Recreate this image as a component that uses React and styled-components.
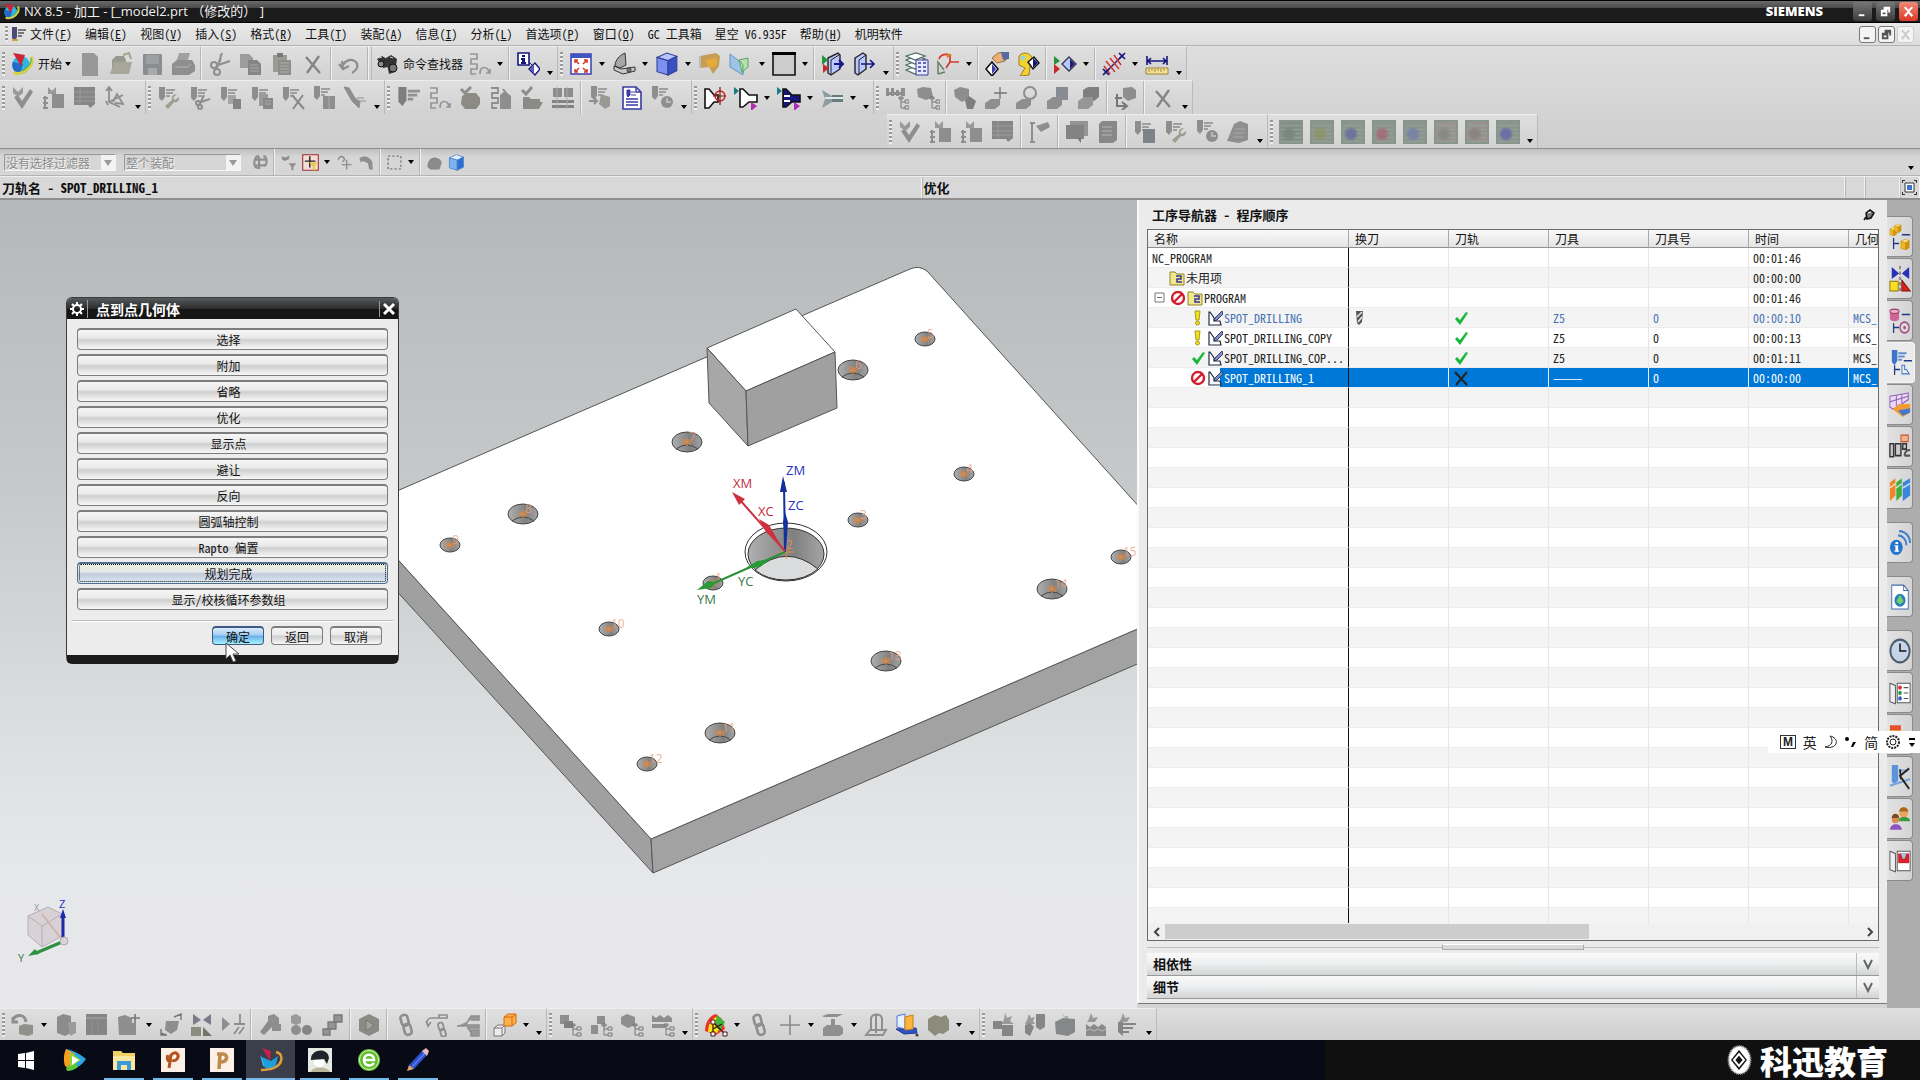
import React from 'react';
import styled, { createGlobalStyle, css } from 'styled-components';

const GlobalStyle = createGlobalStyle`
  * { box-sizing: border-box; }
  body {
    margin: 0;
    overflow: hidden;
    font-family: 'Noto Sans CJK SC', 'Liberation Sans', sans-serif;
    font-feature-settings: 'hwid';
    font-size: 12px;
    line-height: 16px;
    color: #111;
  }
  button, select {
    font: inherit;
    font-feature-settings: inherit;
    color: inherit;
    margin: 0;
    padding: 0;
    border: 0;
    background: none;
  }
`;

const GRAY = '#8e8e8e';
const DARK = '#777777';

/* ---------- icons, all on a 24 x 24 grid ---------- */

const Tool = ({ x = 0, y = 0, c = GRAY }) => (
  <g transform={`translate(${x} ${y})`} fill={c}>
    <path d="M1 0h6v10l-3 4-3-3z" />
    <path d="M8 2h9v2H8zM8 5h7v2H8zM8 8h4v2H8z" fillOpacity=".8" />
  </g>
);

const Chain = ({ x = 0, y = 0, c = GRAY }) => (
  <g transform={`translate(${x} ${y})`} fill="none" stroke={c} strokeWidth="2.6">
    <rect x="2" y="1" width="7" height="11" rx="3" transform="rotate(-15 5 6)" />
    <rect x="5" y="10" width="7" height="11" rx="3" transform="rotate(-15 8 15)" />
  </g>
);

const Tree = ({ x = 0, y = 0, c = DARK }) => (
  <path
    transform={`translate(${x} ${y})`}
    fill="none"
    stroke={c}
    d="M2 0v11h4M2 5h4M6 3h4v3H6zM6 9h4v3H6zM0 0h4v2H0z"
  />
);

const Cube = ({ x = 0, y = 0, s = 1, top = '#a5a5a5', left = '#979797', right = '#858585', edge = 'none' }) => (
  <g transform={`translate(${x} ${y}) scale(${s})`} stroke={edge}>
    <path d="M0 4l9-4 9 3-8 4z" fill={top} />
    <path d="M0 4l10 3v13L0 17z" fill={left} />
    <path d="M10 7l8-4v13l-8 4z" fill={right} />
  </g>
);

const Orbit = () => (
  <>
    <circle cx="11" cy="13" r="9" fill="#31b6df" />
    <path d="M3 10a9 9 0 0 0 7 12l3-10z" fill="#2269c9" />
    <path d="M3 1l12 2-4 11z" fill="#cf2336" />
    <path d="M21 5c3 5-1 12-8 15-4 2-8 2-9 0" fill="none" stroke="#d8cf42" strokeWidth="3" />
    <path d="M21 6c1 5-3 10-9 13" fill="none" stroke="#3fae49" />
  </>
);

const Check = ({ c = GRAY }) => <path d="M3 11l4-2 4 6L19 3l3 3-11 17z" fill={c} />;

const glyphs = {
  nx: <Orbit />,
  newFile: <path d="M4 1h12l4 4v19H4z" fill="#989898" />,
  open: <><path d="M3 8l4-4h8l2 4v14H3z" fill="#99998f" /><path d="M1 22l4-12h18l-3 12z" fill="#a7a79b" /><path d="M14 3l6-2 2 6" fill="none" stroke="#a3a38f" strokeWidth="2" /></>,
  save: <><rect x="3" y="2" width="19" height="21" rx="1" fill="#8b8e91" /><path d="M6 3h13v9H6z" fill="#9ca0a2" /><path d="M8 16h9v7H8z" fill="#a9a9a9" /></>,
  print: <><path d="M8 1h11l-3 10H5z" fill="#a0a0a0" /><path d="M1 12l5-4h15l3 5v6l-6 4H1z" fill={GRAY} /><path d="M4 15h13l3-3" fill="none" stroke="#b5b5b5" /></>,
  cut: <g fill="none" stroke={GRAY} strokeWidth="2"><path d="M9 16L14 1M10 13l12-4M13 2l-1 8" /><circle cx="6" cy="13" r="3" /><circle cx="9" cy="20" r="3" /></g>,
  copy: <><path d="M1 2h9l4 4v10H1z" fill="#9c9c9c" /><path d="M9 8h9l4 4v11H9z" fill="#858585" /><path d="M11 13h8M11 16h9M11 19h9" stroke="#a9a9a9" /></>,
  paste: <><path d="M3 3h14v17H3z" fill="#9b9b93" /><path d="M7 1h6v4H7z" fill={DARK} /><path d="M8 8h13v15H8z" fill="#8d8d89" /><path d="M10 11h9M10 14h9M10 17h9M10 20h9" stroke="#adadad" /></>,
  cross: <path d="M5 5l14 16M18 4L6 21" stroke="#858585" strokeWidth="2.4" />,
  undo: <path d="M5 17l-1-8M4 15c3-7 9-9 14-5 3 4 1 8-4 11M1 12l4 5 6-3" fill="none" stroke={GRAY} strokeWidth="2.2" />,
  finder: <><g fill="#333"><path d="M2 7l5-3 5 3 1 8-5 1z" /><path d="M11 6l5-3 6 4-2 13-6 2z" /></g><circle cx="6" cy="12" r="3" fill="#8a8a8a" stroke="#111" /><circle cx="18" cy="16" r="4" fill="#777" stroke="#111" /><path d="M4 6l3-1M15 5l3 1" stroke="#ccc" /></>,
  path: <path d="M3 2h7v5H4v5h6v5H4v5h5M13 22c0-9 8-8 9-1m-3 0h4v-4" fill="none" stroke="#969696" strokeWidth="1.7" />,
  info: <><path d="M2 1h11v12H2z" fill="#fff" stroke="#15157c" strokeWidth="1.6" /><path d="M6 3h3v2H6zM5 6h4v4h1v2H5v-2h1V8H5z" fill="#15157c" /><path d="M13 17l6-6 5 6-5 6z" fill="#fff" stroke="#15157c" strokeWidth="1.4" /><path d="M18 12v10l-4-5z" fill="#5b5bb5" /><path d="M13 10l3 3" stroke="#15157c" /></>,
  fit: <><path d="M2 2h20v20H2z" fill="#fff" stroke="#3d3db3" strokeWidth="1.5" /><path d="M2 2h20v4H2z" fill="#3d55bd" /><path d="M7 9l3 3M17 9l-3 3M7 19l3-3M17 19l-3-3M6 11V8h3M15 8h3v3M6 17v3h3M15 20h3v-3" fill="none" stroke="#d53623" strokeWidth="1.5" /></>,
  erase: <><path d="M3 14C3 8 8 3 13 1l1 12-6 3z" fill="#a7a7a7" stroke="#333" /><path d="M2 14l7 3 14-2v4l-12 3-9-4z" fill="#c9c9c9" stroke="#333" /><circle cx="17" cy="18" r="2" fill="#888" stroke="#333" /></>,
  shaded: <Cube x={2} y={1} s={1.1} top="#b7c4ff" left="#7b91f2" right="#3850c0" edge="#344199" />,
  section: <><path d="M2 4l16-3 4 3-1 10-6 8-4-7-9 1z" fill="#c79d55" /><path d="M7 8l12-2-1 8-7 2z" fill="#e6a93c" /><path d="M2 4v12" stroke="#b9b9b9" strokeWidth="2" /></>,
  clip: <><path d="M1 2l13 10v11L1 15z" fill="#9cc4e6" stroke="#6a93c0" /><path d="M10 8l9-2v9l-6 5z" fill="#b8dfb3" stroke="#57a364" /><path d="M10 8l4 5v8" fill="none" stroke="#57a364" /></>,
  square: <><path d="M1 1h22v22H1z" fill="#ccc" stroke="#111" strokeWidth="1.6" /><path d="M0 0h24v3H0z" fill="#000" /></>,
  enterPart: <><path d="M7 6l10-5 2 2v14l-9 6-3-2z" fill="#b9c9ff" stroke="#222" strokeWidth="1.4" /><path d="M10 8v14M10 8l8-5" stroke="#222" /><path d="M1 3l6 5-6 5z" fill="#23933a" /><path d="M2 12l6 4-6 5z" fill="#c92929" /><path d="M13 12h9m-4-4l4 4-4 4" fill="none" stroke="#16168a" strokeWidth="2" /></>,
  leavePart: <><path d="M3 6l8-5 3 2v14l-8 6-3-2z" fill="#b9c9ff" stroke="#222" strokeWidth="1.4" /><path d="M7 8v14M7 8l7-5" stroke="#222" /><path d="M9 12h13m-4-4l4 4-4 4" fill="none" stroke="#16168a" strokeWidth="1.7" /></>,
  layers: <><g fill="#fff" stroke="#4c6c62" strokeWidth="1.2"><path d="M1 18l10-4 9 3-10 5z" /><path d="M1 13l10-4 9 3-10 5z" /><path d="M1 8l10-4 9 3-10 5z" /><path d="M1 4l10-3 9 3-10 4z" /></g><path d="M11 8h12v15H11z" fill="#e5e9ff" stroke="#3b3b9b" /><path d="M13 11h3M18 11h3M13 15h3M18 15h3M13 19h3M18 19h3" stroke="#3b3b9b" strokeWidth="1.7" /></>,
  wcs: <><path d="M2 22V10l6 8M2 22l7-2" fill="none" stroke="#667e6c" strokeWidth="1.5" /><path d="M3 7c2-5 7-5 11-4M14 2v8l-4 6M14 10h9" fill="none" stroke="#d23a2f" strokeWidth="1.7" /><path d="M10 1l6 2-5 3z" fill="#e07925" /></>,
  handDiamond: <><path d="M7 6l6-5 6-1 4 4-3 5-8 2z" fill="#e9b073" stroke="#9b6c42" /><path d="M16 0h8v7l-6 1z" fill="#566aa4" /><path d="M1 17l6-7 6 7-6 7z" fill="#fff" stroke="#111" strokeWidth="1.6" /><path d="M7 12v10l4-5z" fill="#3b3bb5" /></>,
  keyDiamond: <><path d="M3 4c5-6 14-2 13 4l4 3-6 3-1 9-9 1 5-8-6-3z" fill="#f1d332" stroke="#a27b18" /><circle cx="7" cy="6" r="2.4" fill="#8ed4e8" /><path d="M12 10l6-5 5 6-6 6z" fill="#fff" stroke="#111" strokeWidth="1.4" /><path d="M17 6v10l5-5z" fill="#15157c" /></>,
  playDiamond: <><path d="M1 4l6 5-6 4z" fill="#23933a" /><path d="M1 12l6 5-6 5z" fill="#c92929" /><path d="M9 12l7-7 7 7-7 7z" fill="#b9c9ff" stroke="#33334c" strokeWidth="1.3" /><path d="M17 7v10l5-5z" fill="#20206e" /></>,
  distance: <><path d="M3 21L21 3" stroke="#15157c" strokeWidth="1.2" /><path d="M4 9l9 11M8 6l9 11M12 3l7 10M2 14l6 8" stroke="#d23434" strokeWidth="1.5" /><path d="M1 17l6 6M1 23l6-6M17 1l6 6M17 7l6-6" stroke="#15157c" strokeWidth="1.7" /></>,
  ruler: <><path d="M2 4v9M22 4v9M3 9h18M6 6L3 9l3 3M18 6l3 3-3 3" fill="none" stroke="#15157c" strokeWidth="1.6" /><path d="M1 16h22v6H1z" fill="#f5e19a" stroke="#9a8330" /><path d="M4 17v3M7 17v2M10 17v3M13 17v2M16 17v3M19 17v2" stroke="#9a8330" /></>,
  verify: <><Check /><path d="M2 1l5 5 5-5v6L7 11 2 7z" fill="#9a9a9a" /></>,
  opTree: <><path d="M6 1l4 4 4-4v7H6z" fill="#999" /><path d="M10 8h12v14H10z" fill={GRAY} /><path d="M3 10v12M1 12h5M1 17h5M1 22h5" stroke={GRAY} strokeWidth="2" /></>,
  list: <><path d="M1 1h21v17l-5 4-2-3H1z" fill="#868686" /><path d="M1 6h21M1 11h21M1 15h21M7 1v17" stroke="#9b9b9b" /></>,
  axes: <path d="M5 2v14l11 5M5 16l14-7M2 5l3-4 3 4M9 16l4-8 6 10-8-1M4 19l-2-4" fill="none" stroke={GRAY} strokeWidth="1.8" />,
  toolWrench: <><Tool x={1} y={1} /><path d="M20 8l-4 4 2 2 4-3c1 4-3 6-5 5l-6 7-3-3 7-6c-1-3 1-6 5-6z" fill="#a09c8e" /></>,
  toolCut: <><Tool x={2} y={1} /><g fill="none" stroke={GRAY} strokeWidth="2"><path d="M12 18l4-9M13 16l9-3" /><circle cx="10" cy="17" r="2" /><circle cx="12" cy="21" r="2" /></g></>,
  toolCopy: <><Tool x={1} y={1} /><path d="M9 9h8v9H9z" fill="#a5a5a5" /><path d="M14 13h8v10h-8z" fill="#828488" /></>,
  toolPaste: <><Tool x={1} y={1} /><path d="M9 8h9v12H9z" fill="#9b9b95" /><path d="M13 12h10v11H13z" fill="#87898a" /><path d="M15 15h6M15 18h6" stroke="#aaa" /></>,
  toolCross: <><Tool x={1} y={1} /><path d="M11 9l12 14M22 9L12 23" stroke="#888" strokeWidth="2" /></>,
  toolCard: <><Tool x={1} y={0} /><path d="M11 10h12v13H11z" fill={GRAY} /><path d="M17 10v13" stroke="#aaa" /></>,
  toolArrow: <path d="M1 1l5 1 6 10 5 4-1 6-7-7zM14 12h7M15 15h8" fill={GRAY} stroke={GRAY} />,
  tool: <g transform="translate(1 1) scale(1.35)"><Tool c="#7e7e7e" /></g>,
  toolBag: <><path d="M3 3l4 4 6-6" fill="none" stroke={GRAY} strokeWidth="3" /><path d="M4 10l5-3h9l4 5v6l-4 5H7l-4-5z" fill="#8b8b83" /></>,
  pathTool: <><path d="M2 2h7v5H3v5h6v5H3v5h5" fill="none" stroke={GRAY} strokeWidth="1.8" /><path d="M11 9l5-4 6 5v13H11z" fill={GRAY} /><path d="M14 3l3 4" stroke={GRAY} strokeWidth="2" /></>,
  checkFolder: <><path d="M2 4l4 4 6-7" fill="none" stroke={GRAY} strokeWidth="3" /><path d="M3 11h6l2 2h9v3h3l-4 7H3z" fill="#8a8a87" /></>,
  simulate: <><path d="M2 2h9v9H2zM13 2h9v9h-9z" fill="#8c8c8c" /><path d="M1 14h22v3H1zM1 19h22v3H1z" fill="#828282" /><path d="M6 1v22M16 1v22" stroke="#a9a9a9" /></>,
  post: <><Tool x={2} y={0} /><path d="M1 15h8m-3-3l3 3-3 3" fill="none" stroke={GRAY} strokeWidth="2" /><path d="M13 8l9 3v9l-5 3-6-5z" fill="#999993" /></>,
  shopDoc: <><path d="M4 1h13l5 5v17H4z" fill="#fff" stroke="#3a3aa6" strokeWidth="1.6" /><path d="M17 1v5h5M7 13h12M7 16h12M7 19h12" fill="none" stroke="#3a3aa6" strokeWidth="1.4" /><path d="M8 4h3v5l-2 2-1-2zM12 6h4M12 9h5" fill="#3a3aa6" stroke="#3a3aa6" /></>,
  toolClock: <><Tool x={1} y={0} /><circle cx="17" cy="16" r="6" fill={GRAY} /><path d="M17 12v4h4" fill="none" stroke="#c9c9c9" strokeWidth="1.4" /></>,
  funnelTarget: <><path d="M2 3h4l5 6h4v7h-4l-5 6H2z" fill="#fff" stroke="#111" strokeWidth="1.6" /><circle cx="17" cy="10" r="5" fill="none" stroke="#c22" strokeWidth="1.4" /><path d="M17 1v18M10 10h13" stroke="#7c1a1a" strokeWidth="1.2" /></>,
  funnel: <><path d="M6 3h3l6 6h8v7h-8l-6 5H6z" fill="#fff" stroke="#111" strokeWidth="1.6" /><path d="M0 1l5 4-5 4z" fill="#197c83" /><path d="M17 16l6 4-6 5z" fill="#b02bb0" /></>,
  funnelBlue: <><path d="M6 3h3l6 6h8v7h-8l-6 5H6z" fill="#15157c" stroke="#111" strokeWidth="1.6" /><path d="M7 9h6v2H7zM7 14h6v2H7z" fill="#fff" /><path d="M0 1l5 4-5 4z" fill="#197c83" /><path d="M17 16l6 4-6 5z" fill="#b02bb0" /></>,
  nozzle: <><path d="M2 4l10 6v6L2 22l3-9z" fill="#8a9c9f" /><path d="M12 9h11v7H12z" fill="#687c80" /><path d="M5 12h18" stroke="#dfe9ea" strokeWidth="2" /></>,
  wallTree: <><path d="M1 2h3v8H1zM6 2h3v8H6zM11 4h3v6h-3zM16 2h4v8h-4z" fill={GRAY} /><path d="M1 6h19v3H1z" fill={GRAY} /><Tree x={14} y={11} /></>,
  blockTree: <><path d="M1 3l6-2 8 1 2 9-7 3-8-3z" fill={GRAY} /><Tree x={14} y={11} /></>,
  twoBlocks: <><path d="M1 4l6-3 9 2v9l-7 4-7-5z" fill={GRAY} /><path d="M12 14l4-4 7 5-3 8h-6z" fill="#7d7d7d" /></>,
  plusBlock: <><path d="M16 1v12M10 7h13" stroke={DARK} strokeWidth="1.4" /><path d="M1 17l6-4h9v6l-5 4H1z" fill={GRAY} /></>,
  ringBlock: <><circle cx="15" cy="7" r="6" fill="none" stroke={GRAY} strokeWidth="2" /><path d="M1 17l6-4h9v6l-5 4H1z" fill={GRAY} /></>,
  stackBlock: <><path d="M10 1h12v13H10z" fill="#878b92" /><path d="M1 15l6-4h9v8l-5 4H1z" fill={GRAY} /></>,
  stackPile: <><path d="M6 4l5-3h11v10l-5 4H6z" fill="#7f7f7f" /><path d="M1 15l6-4h9v8l-5 4H1z" fill="#969696" /></>,
  arrowPile: <><path d="M9 2l9-1 4 3v8l-8 3-5-4z" fill={GRAY} /><path d="M3 8v12h9m-4-4l5 4-5 4M1 12h7" fill="none" stroke={DARK} strokeWidth="2" /></>,
  flag: <><path d="M4 3v18M2 22h5M2 3h5" stroke={GRAY} strokeWidth="2" /><path d="M8 6l12-4 2 5-9 5z" fill={GRAY} /></>,
  sheets: <><path d="M5 1h18v15H5z" fill="#949494" /><path d="M1 5h18v14H1z" fill="#838383" /><path d="M12 18l4 5v-5z" fill={DARK} /></>,
  book: <><path d="M6 1h15v19l-4 3H3V4z" fill="#888" /><path d="M6 7h10M6 11h10M6 15h10" stroke="#a5a5a5" strokeWidth="1.4" /></>,
  toolSheet: <><Tool x={1} y={1} /><path d="M10 9h12v14H10z" fill="#7c8288" /></>,
  report: <><path d="M8 4l6-3 8 3v16l-9 3-12-2z" fill={GRAY} /><path d="M9 9h10M8 13h10M7 17h10" stroke="#a9a9a9" /></>,
  hookBlock: <><path d="M2 6c4-5 12-5 13 3M2 4v5h5" fill="none" stroke={GRAY} strokeWidth="3" /><path d="M8 13l5-2 9 1v9l-5 2-9-2z" fill="#90908a" /></>,
  boxes: <><path d="M3 4l6-3 8 2v17l-6 3-8-3z" fill="#8c8c8c" /><path d="M14 9h8v11l-6 3z" fill="#9c9c9c" /></>,
  panel: <><path d="M1 1h21v21H1z" fill="#858585" /><path d="M1 5h21" stroke="#aaa" /><path d="M7 5v17M13 5v17" stroke="#8f8f8f" /></>,
  addPart: <><path d="M2 4l7-2 7 3v5h4v12H3z" fill={GRAY} /><path d="M19 1v9M15 5h9" stroke={DARK} strokeWidth="1.6" /></>,
  movePart: <><path d="M7 8h13l-2 9-6 4-6-4z" fill={GRAY} /><path d="M15 4l7-3v6M2 16v6h6M2 20l5 2" fill="none" stroke={DARK} strokeWidth="1.4" /></>,
  mirror: <><path d="M3 1l8 6-8 5zM21 1l-8 6 8 5z" fill="#7a7a88" /><path d="M1 14h10v9H1z" fill="#8b8b80" /><path d="M13 14l9 9h-9z" fill="#77736b" /><path d="M12 0v24" stroke="#ddd" strokeDasharray="3 2" /></>,
  constrain: <><path d="M1 4l8 7-8 7z" fill={GRAY} /><path d="M19 1v10M13 11h11M13 21l5-7M18 21l5-7" stroke={GRAY} strokeWidth="1.8" /></>,
  balls: <><path d="M10 3l6-2 5 4v6l-5 3-6-3z" fill={GRAY} /><path d="M10 8l5 5-9 9-4-3z" fill="#8b8b8b" /><path d="M14 11h9v7h-9z" fill={GRAY} /></>,
  balls3: <><path d="M2 3l5-2 5 3v6l-5 2-5-2z" fill="#9a9a9a" /><circle cx="7" cy="17" r="5" fill={GRAY} /><circle cx="18" cy="17" r="5" fill="#858585" /></>,
  steps: <g fill="#949494" stroke={DARK} strokeWidth="1.3"><path d="M14 2h8v7h-8zM8 9h8v7H8zM3 16h7v6H3z" /></g>,
  hex: <><path d="M12 1l10 5v12l-10 5L2 18V6z" fill="#8b8b86" /><path d="M9 7l8 5-8 6z" fill="#a5a5a5" stroke="#777" /></>,
  chain: <g transform="translate(5 1)"><Chain /></g>,
  pathChain: <><path d="M2 10c0-5 4-5 4-5h16M1 8l2 5 3-4M14 2h8v3h-8z" fill="none" stroke={GRAY} strokeWidth="1.7" /><g transform="translate(12 9) scale(.7)"><Chain /></g></>,
  branch: <path d="M1 13h8l6-10h8v4h-8M9 12h14v3H12l4 6M15 17h8v6h-8z" fill="#999" stroke={GRAY} strokeWidth="1.5" />,
  swapCube: <><path d="M1 15l4-3h7v8l-3 3H1z" fill="#ececec" stroke="#777" /><path d="M1 15h8v8M9 15l3-3" fill="none" stroke="#777" /><path d="M11 4l4-3h8v9l-4 3h-8z" fill="#fcb24a" stroke="#d8660c" /><path d="M11 4h8v9M19 4l4-3" fill="none" stroke="#d8660c" /></>,
  nodesA: <><path d="M2 2h9v9H2z" fill={GRAY} /><path d="M6 8h9v7H6z" fill="#808080" /><Tree x={13} y={11} /></>,
  nodesB: <><path d="M2 12h7v9H2zM8 3h8v8H8z" fill={GRAY} /><Tree x={13} y={11} /></>,
  nodesC: <><path d="M1 4l6-3 8 3v8l-7 3-7-4z" fill={GRAY} /><Tree x={13} y={11} /></>,
  nodesD: <><path d="M1 2l4 3 4-3 4 3 4-3 4 3v4H1zM1 11h13v4H1z" fill={GRAY} /><Tree x={13} y={11} /></>,
  rainbow: <><path d="M1 18C1 8 7 2 12 1l6 5 3 10-9 6z" fill="#ee3326" /><path d="M4 19c0-8 4-13 8-15l6 7-5 9z" fill="#f7e51a" /><path d="M13 2l8 7-5 9-5-5z" fill="#40b53d" /><path d="M9 21V9l12 12M9 16l9-5" fill="none" stroke="#4b1010" strokeWidth="1.3" /><path d="M7 7h4v4H7zM7 19h4v4H7zM19 19h4v4h-4z" fill="#fff" stroke="#4b1010" /></>,
  plus: <path d="M12 2v20M2 12h20" stroke="#8a8a8a" strokeWidth="1.6" />,
  press: <path d="M1 3l6-2h15l-6 3H3zM10 6h4v7h-4zM2 15l4-3h13l3 3v6l-4 2H2z" fill="#8f8f8f" />,
  arch: <path d="M7 18V6c0-6 11-6 11 0v12M12 2v18M2 22l4-5h16l-3 5z" fill="none" stroke={GRAY} strokeWidth="2" />,
  openBox: <><path d="M1 16l8 5 13-1-1-5z" fill="#2c52c4" stroke="#1c3796" /><path d="M2 3l8-2v15l-8-2z" fill="#e7f1ff" stroke="#4b78d8" /><path d="M10 4l8-2v14l-8 1z" fill="#fbb53e" stroke="#c98214" /><circle cx="22" cy="22" r="1.6" fill="#444" /></>,
  rock: <path d="M2 6l7-4 6 2 5-2 3 5v10l-6 4-4-1-4 3-7-6z" fill="#8d8b7c" />,
  burstA: <><path d="M14 0l2 5 5-2-2 5 4 3H10l3-4z" fill="#999" /><path d="M2 8h9v8H2zM11 12h11v11H11z" fill="#858585" /></>,
  burstB: <><path d="M7 1l2 4 4-1-2 4 2 3H3l2-4z" fill="#999" /><path d="M14 1h9v13l-5 3-4-3zM3 12l5-2 4 4-4 9-5-3z" fill="#868686" /></>,
  burstC: <><path d="M9 0l2 4 4-1-1 4z" fill="#999" /><path d="M2 9l8-4 12 1v13l-7 4-12-2z" fill="#858888" /></>,
  burstD: <><path d="M7 0l2 5 5-1-3 5H3l2-3z" fill="#999" /><path d="M2 11l4 3 4-3 4 3 4-3 4 3v9H2z" fill="#8a8a8a" /><path d="M2 18l4-2 4 2 4-2 4 2 4-2" fill="none" stroke="#bbb" /></>,
  burstE: <><path d="M8 0l2 5 5-1-3 5H4l2-3z" fill="#999" /><path d="M3 9h5v14l-5-4z" fill="#858585" /><path d="M8 11h13M8 15h10M8 19h6" stroke="#858585" strokeWidth="2" /></>,
  gears: <g fill="none" stroke={GRAY} strokeWidth="3"><path d="M10 3c-8 0-9 15-2 17M16 3c6 1 6 12 1 14M10 4v17M5 8h15M6 16h13" /></g>,
  filterTool: <path d="M2 3l6 2 5-3v5l-6 3-4-2zM12 13h11l-4 5v5h-3v-5z" fill={GRAY} />,
  snapFilter: <><path d="M1 1h22v22H1z" fill="#f3ddd8" stroke="#9c2e2e" strokeWidth="1.5" /><path d="M11 3v16M4 10h15" stroke="#222" strokeWidth="2" /><path d="M10 12h12l-4 5v6h-3v-6z" fill="#ecc93a" /></>,
  snapAdd: <path d="M3 8c2-6 8-6 9 0l-3 3M15 8v14M8 15h14" fill="none" stroke={GRAY} strokeWidth="2" />,
  snapHook: <path d="M2 6c6-5 15-2 18 5l1 11h-5l-2-9-7-3-3 2z" fill={GRAY} />,
  marquee: <path d="M3 3h18v18H3z" fill="none" stroke="#777" strokeWidth="2" strokeDasharray="3 3" />,
  blob: <path d="M2 18c0-6 3-12 9-13 6 0 11 3 11 8l-3 9H6z" fill="#8a8a8a" />,
  cubeOpen: <Cube x={2} y={1} s={1.1} top="#e4f1ff" left="#7db4ee" right="#2d6fd0" edge="#4a7fca" />,
};

const Glyph = ({ name, size = 24 }) => (
  <svg width={size} height={size} viewBox="0 0 24 24" aria-hidden="true">{glyphs[name]}</svg>
);

/* ---------- shell ---------- */

const Page = styled.div`
  display: flex;
  flex-direction: column;
  height: 100vh;
  background: #d4d4d4;
`;

const TitleBar = styled.header`
  display: flex;
  align-items: center;
  gap: 4px;
  height: 23px;
  flex: none;
  padding: 0 2px 1px 3px;
  color: #f2f2f2;
  background: linear-gradient(#000 0, #000 1px, #6a6a6a 1px, #4a4a4a 8px, #1b1b1b 8px, #1b1b1b 22px, #000 22px);
`;

const AppTitle = styled.h1`
  flex: 1;
  margin: 0;
  font: 400 13px/20px 'Open Sans', 'Noto Sans CJK SC', sans-serif;
  font-feature-settings: normal;
  white-space: pre;
`;

const Brand = styled.span`
  margin-right: 26px;
  font: 800 13px/20px 'Open Sans', 'Liberation Sans', sans-serif;
  font-feature-settings: normal;
  color: #fff;
`;

const WindowButton = styled.button`
  display: grid;
  place-items: center;
  width: 19px;
  height: 19px;
  border-radius: 3px;
  background: ${p => (p.$close ? 'linear-gradient(#ef8a78, #d93a26)' : 'linear-gradient(#777, #3c3c3c)')};
  ${p => p.$small && css`
    width: 17px;
    height: 17px;
    margin-left: 2px;
    border: 1px solid ${p.$off ? '#ccc' : '#777'};
    background: #f4f4f4;
  `}
`;

const Bar = styled.nav`
  display: flex;
  align-items: center;
  flex: none;
  height: 23px;
  padding: 0 6px 0 3px;
  border-bottom: 1px solid #b3b3b3;
  background: linear-gradient(#e9e9e9, #dcdcdc);
`;

const MenuItems = styled.div`
  display: flex;
  flex: 1;
  gap: 13px;
  margin-left: 4px;
`;

const MenuButton = styled.button`
  white-space: pre;
`;

const Grip = styled.span`
  width: 3px;
  height: ${p => p.$h || 24}px;
  margin: 0 2px;
  flex: none;
  background: repeating-linear-gradient(#999 0, #999 2px, #eee 2px, #eee 4px);
`;

const ToolDeck = styled.section`
  flex: none;
  border-bottom: 1px solid #8f8f8f;
  background: linear-gradient(#dedede, #cecece);
`;

const ToolRow = styled.div`
  display: flex;
  align-items: center;
  height: 34px;
  padding-left: ${p => p.$start || 0};
`;

const ToolGroup = styled.div`
  display: flex;
  align-items: center;
  height: 100%;
  border-top: 1px solid #ededed;
  border-right: 1px solid #bababa;
  background: linear-gradient(#dfdfdf, #d1d1d1);
`;

const ToolButton = styled.button`
  display: flex;
  align-items: center;
  justify-content: center;
  flex: none;
  width: ${p => p.$w || 31}px;
  height: 30px;
`;

const LabelledTool = styled.button`
  display: flex;
  align-items: center;
  gap: 4px;
  padding-left: 3px;
  white-space: nowrap;
`;

const Split = styled.span`
  width: 6px;
  height: 100%;
  flex: none;
  border-left: 2px solid transparent;
  background: linear-gradient(90deg, #b5b5b5 0 1px, #f1f1f1 1px 2px, transparent 2px);
  background-clip: padding-box;
`;

const Drop = styled.button`
  display: flex;
  justify-content: center;
  align-self: ${p => (p.$low ? 'flex-end' : 'center')};
  flex: none;
  width: ${p => (p.$low ? 14 : 12)}px;
  padding: ${p => (p.$low ? '0 0 5px' : 0)};

  &::after {
    content: '';
    border: 3px solid transparent;
    border-top: 4px solid #000;
    border-bottom: 0;
  }
`;

const Swatch = styled.button`
  width: 24px;
  height: 24px;
  margin: 0 3px 0 4px;
  flex: none;
  border: 2px solid #88958c;
  background: ${p => `radial-gradient(circle at 40% 60%, ${p.$spot} 0 25%, transparent 45%), repeating-linear-gradient(${p.$base} 0 3px, #96a098 3px 4px)`};
`;

const SelectionBar = styled.section`
  display: flex;
  align-items: center;
  flex: none;
  height: 27px;
  padding: 0 2px 0 4px;
  border-bottom: 1px solid #b3b3b3;
  background: linear-gradient(#c0c0c0, #d6d6d6 8px);
`;

const Combo = styled.label`
  display: flex;
  align-items: center;
  width: ${p => p.$w}px;
  height: 17px;
  margin-right: 8px;
  border: 1px solid #aaa;
  border-color: #999 #f5f5f5 #f5f5f5 #999;

  select {
    flex: 1;
    min-width: 0;
    height: 15px;
    padding-left: 1px;
    line-height: 15px;
    color: #8b8b8b;
    opacity: 1;
    text-shadow: 1px 1px #f4f4f4;
    appearance: none;
  }

  svg { background: #f3f3f3; }
`;

const StatusBar = styled.section`
  display: flex;
  flex: none;
  height: 24px;
  border-top: 1px solid #eee;
  border-bottom: 2px solid #8f8f8f;
  background: #d8d8d8;
  font-weight: 700;
`;

const StatusCell = styled.div`
  display: flex;
  align-items: center;
  flex: ${p => p.$flex};
  padding-left: 2px;
  font-size: 13px;
  border-right: 1px solid #f2f2f2;
  box-shadow: 1px 0 #b5b5b5;
`;

const Workspace = styled.main`
  display: flex;
  flex: 1;
  min-height: 0;
`;

const Viewport = styled.section`
  position: relative;
  flex: 1;
  min-width: 0;
  overflow: hidden;
  background: linear-gradient(#b4b8b9 0, #c6c9ca 35%, #d9dcdd 62%, #e6e7ea 82%, #e8e8eb 100%);
`;

const Scene = styled.svg`
  display: block;
  width: 100%;
  height: 100%;
  font-family: 'Open Sans', sans-serif;
  font-feature-settings: normal;
`;

/* ---------- dialog ---------- */

const Dialog = styled.section`
  position: absolute;
  left: 66px;
  top: 97px;
  width: 333px;
  border: 1px solid #3c3c3c;
  border-bottom: 9px solid #1b1b1b;
  border-radius: 6px;
  background: #ececec;
`;

const DialogTitle = styled.header`
  display: flex;
  align-items: center;
  height: 21px;
  border-radius: 5px 5px 0 0;
  color: #fff;
  background: linear-gradient(#555b5b, #2b2b2b 50%, #151515 52%);

  h2 {
    flex: 1;
    margin: 0;
    padding-left: 8px;
    border-left: 1px solid #999;
    font-size: 14px;
    line-height: 18px;
  }
  svg { margin: 0 3px; }
  button { display: flex; border-left: 1px solid #999; }
`;

const ActionList = styled.div`
  display: grid;
  gap: 4px;
  margin: 9px 5px 0;
  padding: 0 5px 10px;
  border-bottom: 1px solid #bdbdbd;
  box-shadow: 0 1px #fff;
`;

const PushButton = styled.button`
  height: 22px;
  padding-right: 8px;
  border: 1px solid #7d7d7d;
  border-top-width: 2px;
  border-radius: 4px;
  line-height: 18px;
  background: linear-gradient(#f6f6f6, #e9e9e9 42%, #cfcfcf 52%, #f7f7f7);
  ${p => p.$small && css`
    width: 52px;
    height: 19px;
    padding-right: 0;
    line-height: 15px;
  `}
  ${p => p.$focused && css`
    border-color: #4f6f8f;
    background: linear-gradient(#eceee0, #e4e8e8 42%, #c2c9dc 52%, #dceaf2);
    outline: 1px dotted #111;
    outline-offset: -3px;
  `}
  ${p => p.$primary && css`
    border-color: #3d5a86;
    background: linear-gradient(#d8ecfa, #a9cff3 42%, #6bb2ee 52%, #a7f2fb);
  `}
`;

const DialogFooter = styled.footer`
  display: flex;
  justify-content: flex-end;
  gap: 7px;
  padding: 5px 16px 10px;
`;

const Pointer = styled.svg`
  position: absolute;
  left: 225px;
  top: 442px;
`;

/* ---------- navigator ---------- */

const Navigator = styled.aside`
  display: flex;
  flex-direction: column;
  flex: 0 0 750px;
  min-width: 0;
  margin-bottom: 4px;
  padding: 0 8px 4px 8px;
  border-left: 2px solid #fafafa;
  border-bottom: 1px solid #777;
  background: #ebebeb;
`;

const NavHeader = styled.header`
  display: flex;
  align-items: center;
  justify-content: space-between;
  height: 29px;
  padding: 0 4px 0 5px;

  h2 { margin: 0; font-size: 13px; }
`;

const TableFrame = styled.div`
  display: flex;
  flex-direction: column;
  flex: 1;
  min-height: 0;
  border: 1px solid #6b6b6b;
  background: #fff;
`;

const TableClip = styled.div`
  flex: 1;
  min-height: 0;
  overflow: hidden;
`;

const OpTable = styled.table`
  width: 100%;
  table-layout: fixed;
  border-collapse: separate;
  border-spacing: 0;
`;

const HeadCell = styled.th`
  width: ${p => (p.$w ? `${p.$w}px` : 'auto')};
  height: 18px;
  padding: 0 0 0 6px;
  border-right: 1px solid #aaa;
  border-bottom: 1px solid #8f8f8f;
  font-weight: 400;
  line-height: 16px;
  text-align: left;
  white-space: nowrap;
  background: linear-gradient(#f9f9f9, #e4e4e4);

  &:last-child { border-right: 0; }
`;

const Row = styled.tr`
  color: ${p => p.$color || '#222'};
  background: ${p => (p.$odd ? '#f4f4f4' : '#fff')};

  td { ${p => p.$selected && css`background: #0078d7; border-right-color: #eee;`} }
  td:first-child { ${p => p.$selected && css`background: linear-gradient(90deg, #fff 72px, #0078d7 72px);`} }
`;

const Cell = styled.td`
  height: 20px;
  padding: 0 0 0 4px;
  overflow: hidden;
  white-space: nowrap;
  line-height: 18px;
  border-right: 1px solid ${p => (p.$first ? '#111 !important' : '#e6e6e6')};
  border-bottom: 1px solid #ececec;

  &:last-child { border-right: 0; }
  svg { display: block; flex: none; }
`;

const NameBox = styled.div`
  display: flex;
  align-items: center;
  gap: 1px;
  height: 18px;
  padding-left: ${p => p.$indent}px;
`;

const ScrollTrack = styled.div`
  display: flex;
  align-items: center;
  height: 17px;
  flex: none;
  background: #f0f0f0;

  button { display: flex; width: 17px; justify-content: center; }
  div { flex: 1; height: 15px; padding-right: 272px; }
  span { display: block; height: 15px; background: #cdcdcd; }
`;

const Splitter = styled.div`
  display: flex;
  align-items: center;
  height: 12px;
  flex: none;
  &::before, &::after { content: ''; flex: 295 0 0; height: 1px; background: #bdbdbd; }
  span { flex: 140 0 0; height: 6px; border: 1px solid #aaa; background: #d9d9d9; border-top-color: #fff; }
`;

const Fold = styled.button`
  display: flex;
  align-items: center;
  justify-content: space-between;
  height: 23px;
  flex: none;
  padding-left: 6px;
  border-bottom: 1px solid #999;
  font-size: 13px;
  font-weight: 700;
  background: linear-gradient(#f9f9f9, #eef0f1 45%, #d3d5d5);

  svg { padding: 0 4px; width: 23px; height: 22px; border-left: 1px solid #bbb; }
`;

const TabRail = styled.nav`
  display: flex;
  flex-direction: column;
  gap: 1px;
  flex: 0 0 33px;
  padding-top: 16px;
  background: #adadad;
`;

const Tab = styled.button`
  display: grid;
  place-items: center;
  width: 26px;
  height: 41px;
  margin-top: ${p => (p.$gap ? 12 : 0)}px;
  flex: none;
  border: 1px solid #8a8a8a;
  border-left: 0;
  border-radius: 0 4px 4px 0;
  background: linear-gradient(90deg, #e2e2e2, #d4d4d4);
  ${p => p.$active && css`
    width: 28px;
    border-color: #f7f7f7;
    background: #ebebeb;
  `}
`;

const ImeBar = styled.aside`
  position: fixed;
  right: 0;
  top: 731px;
  display: flex;
  align-items: center;
  justify-content: space-between;
  width: 152px;
  height: 22px;
  padding: 0 4px 0 12px;
  background: #fff;
  font-size: 14px;
  color: #222;
`;

const ImeKey = styled.b`
  padding: 0 2px;
  border: 1px solid #333;
  font: 700 12px/12px 'Liberation Sans', sans-serif;
`;

/* ---------- bottom ---------- */

const BottomTools = styled.section`
  display: flex;
  flex: none;
  height: 32px;
  background: linear-gradient(#dfdfdf, #cfcfcf);
`;

const Taskbar = styled.footer`
  display: flex;
  flex: none;
  height: 40px;
  padding-left: 1px;
  background: linear-gradient(90deg, #080b15 69%, #101010 69%);
`;

const TaskButton = styled.button`
  display: flex;
  align-items: center;
  justify-content: center;
  width: 49px;
  height: 40px;
  background: ${p => (p.$active ? '#3a3f4b' : 'none')};
  box-shadow: ${p => (p.$open ? 'inset 0 -2px #76b9ed' : 'none')};
  ${p => p.$open && !p.$active && css`
    width: 40px;
    margin: 0 4px 0 5px;
  `}
`;

const Watermark = styled.div`
  display: flex;
  align-items: center;
  gap: 8px;
  margin: 0 32px 0 auto;
  font-size: 32px;
  font-weight: 900;
  line-height: 38px;
  color: #fff;
`;

/* ---------- data ---------- */

const D = 'drop';
const M = 'more';
const S = 'split';

const rowOneA = ['newFile', 'open', 'save', 'print', S, 'cut', 'copy', 'paste', 'cross', S, 'undo', S];
const rowOneB = ['path', D, S, 'info', M];
const rowOneC = ['fit', D, 'erase', D, 'shaded', D, 'section', 'clip', D, 'square', D, S, 'enterPart', 'leavePart', M];
const rowOneD = ['layers', 'wcs', D, S, 'handDiamond', 'keyDiamond', S, 'playDiamond', D, S, 'distance', D, 'ruler', M];

const rowTwo = [
  ['verify', 'opTree', 'list', 'axes', M],
  ['toolWrench', 'toolCut', 'toolCopy', 'toolPaste', 'toolCross', 'toolCard', 'toolArrow', M],
  ['tool', 'path', 'toolBag', 'pathTool', 'checkFolder', 'simulate', S, 'post', 'shopDoc', 'toolClock', M],
  ['funnelTarget', 'funnel', D, 'funnelBlue', D, 'nozzle', D, M],
  ['wallTree', 'blockTree', S, 'twoBlocks', 'plusBlock', 'ringBlock', 'stackBlock', 'stackPile', S, 'arrowPile', S, 'cross', M],
];

const rowThree = ['verify', 'opTree', 'opTree', 'list', S, 'flag', S, 'sheets', 'book', S, 'toolSheet', 'toolWrench', 'toolClock', 'report', M];

const swatches = [
  ['#848f88', '#788a80'], ['#8d968a', '#8d956f'], ['#8a968e', '#6c769b'], ['#8d968e', '#a07277'],
  ['#8a968e', '#7983a3'], ['#989490', '#8a8a82'], ['#9a9290', '#8b8580'], ['#8b978e', '#6a70a4'],
];

const bottomGroups = [
  ['hookBlock', D, 'boxes', 'panel', 'addPart', D, 'movePart', 'mirror', 'constrain', S, 'balls', 'balls3', 'steps', S, 'hex', S, 'chain', 'pathChain', 'branch', S, 'swapCube', D, M],
  ['nodesA', 'nodesB', 'nodesC', 'nodesD', M],
  ['rainbow', D, 'chain', 'plus', D, 'press', D, 'arch', 'openBox', 'rock', D, M],
  ['burstA', 'burstB', 'burstC', 'burstD', 'burstE', M],
];

const menus = [
  ['文件', 'F'], ['编辑', 'E'], ['视图', 'V'], ['插入', 'S'], ['格式', 'R'], ['工具', 'T'], ['装配', 'A'],
  ['信息', 'I'], ['分析', 'L'], ['首选项', 'P'], ['窗口', 'O'], ['GC 工具箱'], ['星空 V6.935F'], ['帮助', 'H'], ['机明软件'],
];

const actions = ['选择', '附加', '省略', '优化', '显示点', '避让', '反向', '圆弧轴控制', 'Rapto 偏置', '规划完成', '显示/校核循环参数组'];

const columns = [['名称', 201], ['换刀', 100], ['刀轨', 100], ['刀具', 100], ['刀具号', 100], ['时间', 100], ['几何']];

const operations = [
  { name: 'NC_PROGRAM', time: '00:01:46', indent: 0 },
  { name: '未用项', time: '00:00:00', indent: 17, icons: ['folder'] },
  { name: 'PROGRAM', time: '00:01:46', indent: 1, icons: ['minus', 'stop', 'folder'] },
  { name: 'SPOT_DRILLING', time: '00:00:10', indent: 38, icons: ['warn', 'op'], change: true, track: 'ok', tool: 'Z5', no: '0', geo: 'MCS_', color: '#4873b5' },
  { name: 'SPOT_DRILLING_COPY', time: '00:00:13', indent: 38, icons: ['warn', 'op'], track: 'ok', tool: 'Z5', no: '0', geo: 'MCS_' },
  { name: 'SPOT_DRILLING_COP...', time: '00:01:11', indent: 38, icons: ['ok', 'op'], track: 'ok', tool: 'Z5', no: '0', geo: 'MCS_' },
  { name: 'SPOT_DRILLING_1', time: '00:00:00', indent: 38, icons: ['stop', 'op'], track: 'none', tool: '———', no: '0', geo: 'MCS_', color: '#fff', selected: true },
];

const fillerRows = Array.from({ length: 30 }, (_, i) => i + operations.length);

const marks = {
  minus: <path d="M2 3h9v9H2zM4 7.5h5" fill="#fff" stroke="#777" />,
  stop: <><circle cx="8" cy="8" r="6" fill="#fff" stroke="#d01f2e" strokeWidth="2.4" /><path d="M12 4l-8 8" stroke="#d01f2e" strokeWidth="2.4" /></>,
  folder: <><path d="M1 2h5l2 2h7v11H1z" fill="#f1e88c" stroke="#8f8426" /><path d="M7 6h5v3H8v3h5" fill="none" stroke="#35359c" strokeWidth="1.5" /></>,
  warn: <><path d="M5 1h5l-1 9H6z" fill="#f2e21c" stroke="#a79a20" /><circle cx="7.5" cy="13" r="2" fill="#f2e21c" stroke="#a79a20" /></>,
  op: <><path d="M2 2v13h12l-1-4H7V8L3 2z" fill="#fff" stroke="#222a44" strokeWidth="1.2" /><path d="M15 1L8 8l-1 3 3-1 6-6z" fill="#7f8fc4" stroke="#333a66" /></>,
  ok: <path d="M2 9l2-2 3 3 6-8 2 1-8 12z" fill="#19b83b" />,
  none: <path d="M2 2l12 13M14 2L3 15" stroke="#222" strokeWidth="2" />,
  drill: <><path d="M3 1h7l-1 11-3 3-2-2z" fill="#555" /><path d="M4 7l5-5M5 12l4-5" stroke="#eee" strokeWidth="1.4" /></>,
};

const Mark = ({ name, size = 16 }) => (
  <svg width={size} height={size} viewBox="0 0 16 16" aria-hidden="true">{marks[name]}</svg>
);

const tabIcons = [
  { art: <><Cube x={1} y={3} s={0.4} top="#ffe07a" left="#f2b91d" right="#d7920c" edge="#b8860b" /><Cube x={6} y={0} s={0.4} top="#ffe07a" left="#f2b91d" right="#d7920c" edge="#b8860b" /><Cube x={13} y={14} s={0.5} top="#ffe07a" left="#f2b91d" right="#d7920c" edge="#b8860b" /><path d="M5 13v10M5 18h6M14 10h9" stroke="#223a86" strokeWidth="1.4" /></> },
  { art: <><path d="M3 1l8 6-8 5zM22 1l-8 6 8 5z" fill="#2a30b8" /><path d="M1 14h9v9H1z" fill="#f8df24" stroke="#867612" /><path d="M14 13l9 10h-9z" fill="#d8261c" stroke="#7d120c" /><path d="M12 0v24" stroke="#333" strokeDasharray="3 2" /></> },
  { art: <><path d="M1 3v7c0 3 10 3 10 0V3z" fill="#cf6496" /><ellipse cx="6" cy="3" rx="5" ry="2" fill="#edabc8" stroke="#98406a" /><path d="M5 14v9M5 18h6M14 6h9" stroke="#223a86" strokeWidth="1.4" /><circle cx="17" cy="18" r="5" fill="none" stroke="#a64a88" strokeWidth="1.5" /><circle cx="17" cy="18" r="1.5" fill="#a64a88" /></> },
  { active: true, art: <><Tool x={1} y={0} c="#3f74c9" /><path d="M5 14v9M5 18h6M15 10h9" stroke="#223a86" strokeWidth="1.4" /><path d="M13 14v8h8l-3-4h-2v-4z" fill="none" stroke="#3f74c9" /></> },
  { art: <><path d="M1 4l20-3v6L5 16 1 14z" fill="#ead6f5" stroke="#8b5db4" /><path d="M1 9l20-5M8 3v10M14 2v8" stroke="#8b5db4" /><path d="M4 16l7-5h12v8l-8 4z" fill="#f29a33" /><path d="M10 17l13-2v4l-8 3z" fill="#4478cf" /></> },
  { art: <><path d="M1 9h4v12H1zM7 9h6v11H7zM15 9h4v5h-4z" fill="#ccc" stroke="#333" strokeWidth="1.5" /><path d="M13 1h8v6h-8z" fill="#f5b08f" stroke="#c8512d" /><path d="M17 20c0-6 6-5 6-5M17 20h6" fill="none" stroke="#555" strokeWidth="2" /></> },
  { art: <><path d="M1 6l6-4v16l-6 5z" fill="#f0852a" /><path d="M8 6l6-4v16l-6 5z" fill="#3fae3f" /><path d="M15 6l8-4v16l-8 5z" fill="#3c85dc" /><path d="M1 11l6-4M8 11l6-4M15 11l8-4" stroke="#fff" strokeOpacity=".7" strokeWidth="1.5" /></> },
  { gap: true, art: <><circle cx="8" cy="16" r="7" fill="#2276cf" /><path d="M7 11h3v2H7zM6 14h4v5h1v1H6v-1h1v-4H6z" fill="#fff" /><path d="M10 5c5 0 9 4 9 9M11 1c7 0 12 5 12 11" fill="none" stroke="#3f7fd0" strokeWidth="2" /></> },
  { gap: true, art: <><path d="M3 1h13l5 5v17H3z" fill="#fff" stroke="#4668b1" /><path d="M16 1v5h5" fill="none" stroke="#4668b1" /><circle cx="12" cy="15" r="6" fill="#2b7eb9" /><path d="M8 16l4-6 4 6-4 3z" fill="#78cf67" /></> },
  { gap: true, art: <><circle cx="12" cy="12" r="10.5" fill="#c5d4e6" stroke="#4b5a6b" strokeWidth="2" /><path d="M12 5v7h7" fill="none" stroke="#111" strokeWidth="1.6" /></> },
  { art: <><path d="M1 3l6 2v17l-6-2z" fill="#eee" stroke="#555" /><path d="M9 3h14v18H9z" fill="#fff" stroke="#555" /><circle cx="12" cy="7" r="2" fill="#d63030" /><circle cx="12" cy="12" r="2" fill="#2c9c43" /><circle cx="12" cy="17" r="2" fill="#2e5fc9" /><path d="M16 7h5M16 12h5M16 17h5" stroke="#555" /></> },
  { art: <><path d="M1 3h12v5H1z" fill="#e8502c" /><path d="M1 8h14v5H1z" fill="#f7d321" /><path d="M1 13h10v9H1z" fill="#4ea84e" /></> },
  { art: <><path d="M3 1h7v14l-4 4-3-3z" fill="#5a94da" /><path d="M1 20l22-6M11 6h10" stroke="#7ba7df" strokeWidth="2" /><path d="M22 4L12 11l10 12M12 5l1 9" fill="none" stroke="#222" strokeWidth="2" /></> },
  { art: <><circle cx="16" cy="6" r="5" fill="#e7a762" /><path d="M10 14c0-5 13-5 13 0z" fill="#3b9a3e" /><path d="M11 5c1-5 9-5 10 0z" fill="#a8661f" /><circle cx="7" cy="12" r="4" fill="#d98b54" /><path d="M3 11c0-5 8-5 8 0z" fill="#7c4a1c" /><path d="M1 22c0-7 13-7 13 0z" fill="#9154bd" /></> },
  { art: <><path d="M1 3l6 2v17l-6-2z" fill="#eee" stroke="#555" /><path d="M9 3h14v18H9z" fill="#fff" stroke="#555" /><path d="M10 5h12v9H10z" fill="#d5222c" /><path d="M13 5h6l-2 5h-2z" fill="#8fd0f1" /></> },
];

const holes = [
  { x: 925, y: 339, n: '5' }, { x: 964, y: 474, n: '4' }, { x: 858, y: 520, n: '3' }, { x: 1121, y: 557, n: '15' },
  { x: 713, y: 583, n: '1' }, { x: 450, y: 545, n: '9' }, { x: 609, y: 629, n: '10' }, { x: 647, y: 764, n: '12' },
  { x: 853, y: 370, n: '6', big: true }, { x: 687, y: 442, n: '7', big: true }, { x: 523, y: 514, n: '8', big: true },
  { x: 1052, y: 589, n: '14', big: true }, { x: 886, y: 661, n: '13', big: true }, { x: 720, y: 733, n: '11', big: true },
];

const tasks = [
  { label: '开始菜单', art: <path d="M4 6l7-1v7H4zM12 5l8-2v9h-8zM4 13h7v7l-7-1zM12 13h8v9l-8-2z" fill="#fff" /> },
  { label: '视频', art: <><path d="M3 1c9 2 15 6 20 10-3 5-8 9-18 12z" fill="#29a3ea" /><path d="M3 1l9 5-7 14-3-2C0 12 1 5 3 1z" fill="#f5a11d" /><path d="M3 20l9-6 3 5c-4 3-8 4-11 4z" fill="#59c637" /><path d="M7 4l11 8-11 7z" fill="#8ed63c" /><path d="M9 8l7 4-7 5z" fill="#fff" /></> },
  { label: '文件', open: true, art: <><path d="M1 3h8l2 2h12v17H1z" fill="#f3d063" /><path d="M1 8h22v14H1z" fill="#fbe7a0" /><path d="M5 22v-9h14v9h-4v-5H9v5z" fill="#3b9bd6" /></> },
  { label: '演示一', open: true, art: <><path d="M0 0h24v24H0z" fill="#fdf0e6" /><path d="M8 20l2-13c5-5 9 0 6 4-2 2-4 2-5 1M7 7c-2 5 1 7 3 6" fill="none" stroke="#b5541c" strokeWidth="3" /></> },
  { label: '演示二', open: true, art: <><path d="M0 0h24v24H0z" fill="#fdf0e6" /><path d="M7 6h6c6 1 4 8-2 8M10 6l-1 15" fill="none" stroke="#c08a4c" strokeWidth="3.6" /></> },
  { label: 'NX', open: true, active: true, art: <><path d="M1 7l10 14-7-3z" fill="#29b9e8" /><path d="M3 9l9 4 7-5-3 12-9 2z" fill="#1f9fdc" /><path d="M3 0l9 3-1 10z" fill="#c3224b" /><path d="M17 4c8 2 7 12-2 16-5 2-10 2-13 2" fill="none" stroke="#e59d33" strokeWidth="2.4" /></> },
  { label: '头像', open: true, art: <><path d="M0 0h24v24H0z" fill="#e9e9e4" /><path d="M3 11C3 1 20-1 21 10l-2 6-3-5-13 1z" fill="#20242a" /><path d="M6 12h10v5l-5 3-5-4z" fill="#fff" /><path d="M3 24c1-6 17-6 19 0z" fill="#b9b69c" /></> },
  { label: '浏览器', open: true, art: <><circle cx="12" cy="12" r="11" fill="#61bd2c" /><circle cx="12" cy="12" r="9.5" fill="none" stroke="#d8f5c5" /><path d="M7 12h10c0-7-10-7-10 0 0 6 7 7 10 3" fill="none" stroke="#fff" strokeWidth="2.6" /></> },
  { label: '画笔', open: true, art: <><path d="M3 17L17 2l5 4L8 21z" fill="#2c4fcb" /><path d="M6 19L19 5" stroke="#5f7fe8" strokeWidth="1.5" /><path d="M16 3l4-3 3 3-2 5z" fill="#e6bcbc" /><path d="M1 23l2-6 5 4z" fill="#d8a56a" /></> },
];

/* ---------- parts ---------- */

const Tools = ({ items }) => items.map((item, i) => {
  if (item === S) return <Split key={i} />;
  if (item === D) return <Drop key={i} aria-label="展开" />;
  if (item === M) return <Drop key={i} $low aria-label="更多" />;
  return <ToolButton key={i} aria-label={item}><Glyph name={item} /></ToolButton>;
});

const Group = ({ items, children }) => (
  <ToolGroup>
    <Grip />
    {children}
    {items && <Tools items={items} />}
  </ToolGroup>
);

const winArt = {
  min: 'M3 10h6v2H3z',
  restore: 'M5 2h7v6h-2V5H5zM2 5h7v7H2zm2 3v2h3V8z',
  close: 'M2 3l2-1 3 3 3-3 2 1-4 4 4 4-2 2-3-4-3 4-2-2 4-4z',
};

const WindowButtons = ({ small }) => ['min', 'restore', 'close'].map(name => (
  <WindowButton key={name} $small={small} $close={name === 'close'} $off={small && name === 'close'} aria-label={name}>
    <svg width="13" height="13" viewBox="0 0 14 14">
      <path d={winArt[name]} fill={small ? (name === 'close' ? '#ccc' : '#555') : '#fff'} fillRule="evenodd" />
    </svg>
  </WindowButton>
));

const Hole = ({ x, y, n, big }) => {
  const rx = big ? 15 : 10;
  const ry = big ? 10 : 7;
  return (
    <g transform={`translate(${x} ${y})`}>
      <ellipse rx={rx} ry={ry} fill="url(#bore)" stroke="#444" />
      {big && <path d="M-11 7Q0-1 11 7" fill="none" stroke="#444" />}
      <path d="M-5 0h10M0-4v8M-4-3l8 6M-4 3l8-6" stroke="#e88a3c" />
      <text x="2" y="-1" fontSize="12" fill="#eba27d" fillOpacity=".8">{n}</text>
    </g>
  );
};

const Model = () => (
  <Scene viewBox="0 200 1137 808" preserveAspectRatio="xMinYMin slice">
    <defs>
      <linearGradient id="bore"><stop offset="0" stopColor="#b0b0b0" /><stop offset=".6" stopColor="#808080" /><stop offset="1" stopColor="#a5a5a5" /></linearGradient>
    </defs>
    <g stroke="#555" strokeLinejoin="round">
      <path d="M353 510L651 839L653 873L353 543z" fill="#a0a0a0" />
      <path d="M651 839L1142 627V662L653 873z" fill="#a2a2a2" />
      <path d="M353 510L910 269Q919 265 927 271L1142 510V627L651 839z" fill="#fff" />
      <path d="M707 348L796 309L835 352L746 391z" fill="#fff" />
      <path d="M707 348L746 391L748 446L709 403z" fill="#a7a7a7" />
      <path d="M746 391L835 352L837 408L748 446z" fill="#a0a0a0" />
    </g>
    {holes.map(h => <Hole key={h.n} {...h} />)}
    <ellipse cx="786" cy="552" rx="41" ry="29" fill="#fff" stroke="#333" />
    <ellipse cx="786" cy="554" rx="38" ry="26" fill="url(#bore)" stroke="#333" />
    <path d="M755 570Q786 543 818 569Q805 580 786 580T755 570z" fill="#d9dbdc" stroke="#333" />
    <text x="786" y="549" fontSize="12" fill="#d98b52">2</text>
    <path d="M778 552h16M786 545v14" stroke="#e88a3c" />
    <g strokeWidth="2">
      <path d="M785 552L784 482" stroke="#14309c" />
      <path d="M783 476l4 16h-7zM785 512l3 10-2 28-3-28z" fill="#14309c" />
      <path d="M785 551L740 500" stroke="#cf3040" />
      <path d="M732 492l13 7-6 6zM759 519l10 6 14 24-17-17z" fill="#cf3040" />
      <path d="M785 552L705 587" stroke="#2a8f37" />
      <path d="M697 590l11-9 9 1-6 6zM744 569l13-8 14-2-11 8z" fill="#2a9a38" />
    </g>
    <g fontSize="13">
      <text x="786" y="475" fill="#2232c4">ZM</text>
      <text x="788" y="510" fill="#2232c4">ZC</text>
      <text x="733" y="488" fill="#c22e3c">XM</text>
      <text x="758" y="516" fill="#c22e3c">XC</text>
      <text x="738" y="586" fill="#3a7846">YC</text>
      <text x="697" y="604" fill="#3a7846">YM</text>
    </g>
    <g>
      <path d="M28 916L48 907L62 914V936L42 947L28 935z" fill="#d8d2d6" stroke="#b5adb3" />
      <path d="M28 916L42 926L62 914M42 926V947" fill="none" stroke="#b5adb3" />
      <path d="M63 941L42 914" stroke="#d1b5a8" strokeWidth="2" />
      <path d="M63 940V916" stroke="#1c2aa5" strokeWidth="3" />
      <path d="M63 909l3 9h-6z" fill="#1c2aa5" />
      <path d="M62 942L36 953" stroke="#2c9142" strokeWidth="3" />
      <path d="M28 956l7-7 4 5z" fill="#2c9142" />
      <circle cx="64" cy="941" r="4" fill="#ddd2da" stroke="#aaa" />
      <text x="59" y="908" fontSize="11" fill="#2232c4">Z</text>
      <text x="18" y="962" fontSize="11" fill="#3a7846">Y</text>
      <text x="34" y="911" fontSize="9" fill="#999">X</text>
    </g>
  </Scene>
);

const PointDialog = () => (
  <Dialog aria-label="点到点几何体">
    <DialogTitle>
      <svg width="14" height="14" viewBox="0 0 14 14"><circle cx="7" cy="7" r="4" fill="none" stroke="#fff" strokeWidth="2" /><path d="M7 0v3M7 11v3M0 7h3M11 7h3M2 2l2 2M10 10l2 2M12 2l-2 2M2 12l2-2" stroke="#fff" strokeWidth="2" /></svg>
      <h2>点到点几何体</h2>
      <button aria-label="关闭"><svg width="12" height="16" viewBox="0 0 12 16"><path d="M1 3l10 10M11 3L1 13" stroke="#fff" strokeWidth="3" /></svg></button>
    </DialogTitle>
    <ActionList>
      {actions.map(a => <PushButton key={a} $focused={a === '规划完成'}>{a}</PushButton>)}
    </ActionList>
    <DialogFooter>
      <PushButton $small $primary>确定</PushButton>
      <PushButton $small>返回</PushButton>
      <PushButton $small>取消</PushButton>
    </DialogFooter>
  </Dialog>
);

const OperationNavigator = () => (
  <Navigator>
    <NavHeader>
      <h2>工序导航器 - 程序顺序</h2>
      <svg width="12" height="12" viewBox="0 0 12 12"><path d="M1 11l2-3M3 4l4-3 4 3-3 5-4 1z" fill="#777" stroke="#111" strokeWidth="1.5" /><path d="M5 4l3-1" stroke="#fff" /></svg>
    </NavHeader>
    <TableFrame>
      <TableClip>
        <OpTable>
          <thead>
            <tr>{columns.map(([label, w]) => <HeadCell key={label} $w={w}>{label}</HeadCell>)}</tr>
          </thead>
          <tbody>
            {operations.map((op, i) => (
              <Row key={op.name} $odd={i % 2} $color={op.color} $selected={op.selected}>
                <Cell $first>
                  <NameBox $indent={op.indent}>{(op.icons || []).map(n => <Mark key={n} name={n} />)}<span>{op.name}</span></NameBox>
                </Cell>
                <Cell>{op.change && <Mark name="drill" />}</Cell>
                <Cell>{op.track && <Mark name={op.track} />}</Cell>
                <Cell>{op.tool}</Cell>
                <Cell>{op.no}</Cell>
                <Cell>{op.time}</Cell>
                <Cell>{op.geo}</Cell>
              </Row>
            ))}
            {fillerRows.map(i => (
              <Row key={i} $odd={i % 2}>{columns.map(([label], c) => <Cell key={label} $first={c === 0} />)}</Row>
            ))}
          </tbody>
        </OpTable>
      </TableClip>
      <ScrollTrack>
        <button aria-label="向左"><svg width="8" height="10" viewBox="0 0 8 10"><path d="M6 1L2 5l4 4" fill="none" stroke="#444" strokeWidth="2" /></svg></button>
        <div><span /></div>
        <button aria-label="向右"><svg width="8" height="10" viewBox="0 0 8 10"><path d="M2 1l4 4-4 4" fill="none" stroke="#444" strokeWidth="2" /></svg></button>
      </ScrollTrack>
    </TableFrame>
    <Splitter><span /></Splitter>
    {['相依性', '细节'].map(label => (
      <Fold key={label}>
        {label}
        <svg viewBox="0 0 14 14"><path d="M3 3l4 8 4-8" fill="none" stroke="#666" strokeWidth="2" /></svg>
      </Fold>
    ))}
  </Navigator>
);

const ComboBox = ({ label, width }) => (
  <Combo $w={width}>
    <select disabled aria-label={label}><option>{label}</option></select>
    <svg width="14" height="15" viewBox="0 0 14 15"><path d="M3 5h8l-4 6z" fill="#999" /></svg>
  </Combo>
);

const SmallTool = ({ name, w = 22 }) => (
  <ToolButton $w={w} aria-label={name}><Glyph name={name} size={17} /></ToolButton>
);

const Spacer = styled.span`
  flex: 1;
`;

const App = () => (
  <Page>
    <GlobalStyle />
    <TitleBar>
      <Glyph name="nx" size={17} />
      <AppTitle>NX 8.5 - 加工 - [_model2.prt （修改的） ]</AppTitle>
      <Brand>SIEMENS</Brand>
      <WindowButtons />
    </TitleBar>
    <Bar>
      <Grip $h={16} />
      <svg width="16" height="16" viewBox="0 0 16 16"><path d="M2 1h5v10l-2 4-3-3z" fill="#4c4c78" /><path d="M8 4h8M8 7h6M8 10h4" stroke="#555" strokeWidth="1.5" /><path d="M2 14h6" stroke="#c9a53a" strokeWidth="2" /></svg>
      <MenuItems>
        {menus.map(([label, key]) => (
          <MenuButton key={label}>{label}{key && <>(<u>{key}</u>)</>}</MenuButton>
        ))}
      </MenuItems>
      <WindowButtons small />
    </Bar>
    <ToolDeck>
      <ToolRow>
        <Group items={rowOneA}>
          <LabelledTool><Glyph name="nx" />开始</LabelledTool>
          <Drop aria-label="展开" />
        </Group>
        <ToolGroup>
          <LabelledTool><Glyph name="finder" />命令查找器</LabelledTool>
          <Tools items={rowOneB} />
        </ToolGroup>
        <Group items={rowOneC} />
        <Group items={rowOneD} />
      </ToolRow>
      <ToolRow>
        {rowTwo.map((items, i) => <Group key={i} items={items} />)}
      </ToolRow>
      <ToolRow $start="46.2%">
        <Group items={rowThree} />
        <Group>
          {swatches.map(([base, spot], i) => <Swatch key={i} $base={base} $spot={spot} aria-label={`显示 ${i + 1}`} />)}
          <Drop $low aria-label="更多" />
        </Group>
      </ToolRow>
    </ToolDeck>
    <SelectionBar>
      <ComboBox label="没有选择过滤器" width={112} />
      <ComboBox label="整个装配" width={117} />
      <SmallTool name="gears" />
      <Split />
      <SmallTool name="filterTool" />
      <SmallTool name="snapFilter" />
      <Drop aria-label="展开" />
      <SmallTool name="snapAdd" />
      <SmallTool name="snapHook" />
      <Split />
      <SmallTool name="marquee" />
      <Drop aria-label="展开" />
      <Split />
      <SmallTool name="blob" />
      <SmallTool name="cubeOpen" />
      <Spacer />
      <Drop $low aria-label="更多" />
    </SelectionBar>
    <StatusBar>
      <StatusCell $flex="0 0 48%">刀轨名 - SPOT_DRILLING_1</StatusCell>
      <StatusCell $flex="1">优化</StatusCell>
      <StatusCell $flex="0 0 20px" />
      <StatusCell $flex="0 0 35px" />
      <StatusCell $flex="0 0 20px">
        <svg width="15" height="15" viewBox="0 0 15 15"><path d="M3 3h9v9H3z" fill="#fff" stroke="#333" /><path d="M5 5h5v5H5z" fill="#3b78c8" /><path d="M0 3V0h3M12 0h3v3M0 12v3h3M12 15h3v-3" fill="none" stroke="#333" strokeWidth="2" /></svg>
      </StatusCell>
    </StatusBar>
    <Workspace>
      <Viewport>
        <Model />
        <PointDialog />
        <Pointer width="16" height="22" viewBox="0 0 16 22"><path d="M1 1v16l4-4 3 7 3-1-3-7h6z" fill="#fff" stroke="#444" /></Pointer>
      </Viewport>
      <OperationNavigator />
      <TabRail>
        {tabIcons.map((tab, i) => (
          <Tab key={i} $gap={tab.gap} $active={tab.active} aria-label={`资源 ${i + 1}`}>
            <svg width="22" height="26" viewBox="0 0 24 24" preserveAspectRatio="none">{tab.art}</svg>
          </Tab>
        ))}
      </TabRail>
    </Workspace>
    <BottomTools>
      {bottomGroups.map((items, i) => <Group key={i} items={items} />)}
    </BottomTools>
    <Taskbar>
      {tasks.map(t => (
        <TaskButton key={t.label} $open={t.open} $active={t.active} aria-label={t.label}>
          <svg width="24" height="24" viewBox="0 0 24 24">{t.art}</svg>
        </TaskButton>
      ))}
      <Watermark>
        <svg width="25" height="32" viewBox="0 0 25 32"><ellipse cx="12.5" cy="16" rx="11" ry="14" fill="#fff" stroke="#999" strokeWidth="2" strokeDasharray="1 1" /><path d="M12 6l8 10-8 10-8-10z" fill="#111" /><path d="M12 10l5 6-5 6-5-6z" fill="none" stroke="#fff" strokeWidth="2" /></svg>
        <span>科迅教育</span>
      </Watermark>
    </Taskbar>
    <ImeBar>
      <ImeKey>M</ImeKey>
      <span>英</span>
      <svg width="15" height="14" viewBox="0 0 15 14"><path d="M6 1c10 2 8 14-5 11 7-1 9-6 5-11z" fill="none" stroke="#222" /></svg>
      <svg width="12" height="12" viewBox="0 0 12 12"><circle cx="2" cy="3" r="2" /><path d="M8 6h3l-3 5H6z" /></svg>
      <span>简</span>
      <svg width="16" height="16" viewBox="0 0 16 16"><circle cx="8" cy="8" r="6" fill="none" stroke="#222" strokeWidth="2" strokeDasharray="2 1" /><circle cx="8" cy="8" r="3" fill="none" stroke="#222" /></svg>
      <svg width="8" height="12" viewBox="0 0 8 12"><path d="M1 2h6v2H1zM1 7h6l-3 4z" /></svg>
    </ImeBar>
  </Page>
);

export default App;
